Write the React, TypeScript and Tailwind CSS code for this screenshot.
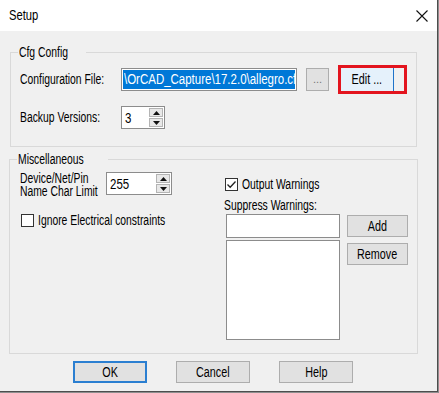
import { type ReactNode } from "react";

const font = {
  fontFamily: '"Liberation Sans", Arial, sans-serif',
};

// the dialog font is narrower than Arial, so squeeze the glyphs horizontally
function T({ children, center, squeeze = "scale-x-[0.74]" }: { children: ReactNode; center?: boolean; squeeze?: string }) {
  return (
    <span className={`inline-block whitespace-nowrap ${squeeze} ${center ? "origin-center" : "origin-left"}`}>
      {children}
    </span>
  );
}

function SpinArrows() {
  return (
    <div className="flex flex-col gap-px">
      <div className="flex h-[9px] w-[14px] items-center justify-center border border-[#b4b4b4] bg-[#e8e8e8]">
        <svg width="7" height="4" viewBox="0 0 7 4">
          <path d="M0 4 L3.5 0 L7 4 Z" fill="#111" />
        </svg>
      </div>
      <div className="flex h-[9px] w-[14px] items-center justify-center border border-[#b4b4b4] bg-[#e8e8e8]">
        <svg width="7" height="4" viewBox="0 0 7 4">
          <path d="M0 0 L3.5 4 L7 0 Z" fill="#111" />
        </svg>
      </div>
    </div>
  );
}

function Spin({ value, width }: { value: string; width: string }) {
  return (
    <div
      className={`flex h-[23px] items-center justify-between border border-[#8c8c8c] bg-white pl-[3px] pr-[1px] ${width}`}
    >
      <span className="text-[14px] leading-none">
        <T squeeze="scale-x-[0.82]">{value}</T>
      </span>
      <SpinArrows />
    </div>
  );
}

function Button({ children, width, primary }: { children: ReactNode; width: string; primary?: boolean }) {
  return (
    <div
      className={`flex h-[22px] items-center justify-center bg-[#e1e1e1] text-[14px] ${width} ${
        primary ? "border-2 border-[#2b7fd1]" : "border border-[#adadad]"
      }`}
    >
      <T center squeeze="scale-x-[0.77]">
        {children}
      </T>
    </div>
  );
}

function Checkbox({ checked }: { checked?: boolean }) {
  return (
    <div className="flex h-[13px] w-[13px] shrink-0 items-center justify-center border border-[#333] bg-white">
      {checked && (
        <svg width="11" height="11" viewBox="0 0 11 11">
          <path d="M1.5 5.5 L4.2 8.3 L9.5 2.5" stroke="#222" strokeWidth="1.3" fill="none" />
        </svg>
      )}
    </div>
  );
}

function Group({ title, children, className }: { title: string; children: ReactNode; className: string }) {
  return (
    <div className={`relative border border-[#d9d9d9] ${className}`}>
      <span className="absolute -top-[8px] left-[7px] w-[68px] text-[14px] leading-[14px]">
        <span className="bg-[#f0f0f0] px-[1px]">
          <T>{title}</T>
        </span>
      </span>
      {children}
    </div>
  );
}

export default function App() {
  return (
    <div className="h-[393px] w-[439px] bg-[#8f8f8f] text-black" style={font}>
      <div className="flex h-[392px] w-[438px] flex-col border-b border-r border-[#4d4d4d] bg-[#f0f0f0]">
        {/* title bar */}
        <div className="flex h-[31px] items-center justify-between bg-white pl-[9px] pr-[9px]">
          <span className="text-[14px]">
            <T squeeze="scale-x-[0.8]">Setup</T>
          </span>
          <svg width="12" height="12" viewBox="0 0 12 12">
            <path d="M0.5 0.5 L11.5 11.5 M11.5 0.5 L0.5 11.5" stroke="#111" strokeWidth="1.1" />
          </svg>
        </div>

        <Group title="Cfg Config" className="ml-[10px] mt-[21px] h-[95px] w-[407px] pl-[9px] pt-[15px]">
          <div className="flex h-[23px] items-center">
            <span className="w-[101px] text-[14px]">
              <T>Configuration File:</T>
            </span>
            <div className="flex h-[23px] w-[176px] items-center overflow-hidden border border-[#8c8c8c] bg-white p-px">
              <div className="flex h-full w-full items-center overflow-hidden bg-[#0078d7] pl-px text-[14px] text-white">
                <T squeeze="scale-x-[0.82]">\OrCAD_Capture\17.2.0\allegro.cfg</T>
              </div>
            </div>
            <div className="ml-[9px] flex h-[23px] w-[23px] items-center justify-center border border-[#adadad] bg-[#e1e1e1] text-[11px] text-[#777]">
              ...
            </div>
            <div className="-my-[3px] ml-[9px] flex h-[29px] w-[69px] border-[3px] border-[#e3141e]">
              <div className="flex h-full w-[53px] items-center justify-center border-r border-[#1f73c9] bg-[#e5f1fb] text-[14px]">
                <T center squeeze="scale-x-[0.77]">
                  Edit ...
                </T>
              </div>
            </div>
          </div>
          <div className="mt-[15px] flex items-center">
            <span className="w-[101px] text-[14px]">
              <T>Backup Versions:</T>
            </span>
            <Spin value="3" width="w-[44px]" />
          </div>
        </Group>

        <Group title="Miscellaneous" className="ml-[9px] mt-[12px] flex h-[195px] w-[409px] pl-[10px] pt-[12px]">
          <div className="w-[204px] shrink-0">
            <div className="flex h-[23px] items-start">
              <div className="flex w-[86px] flex-col text-[14px] leading-[13px]">
                <T>Device/Net/Pin</T>
                <T>Name Char Limit</T>
              </div>
              <Spin value="255" width="w-[66px]" />
            </div>
            <div className="ml-[1px] mt-[19px] flex items-center gap-[4px]">
              <Checkbox />
              <span className="text-[14px] leading-[13px]">
                <T>Ignore Electrical constraints</T>
              </span>
            </div>
          </div>
          <div>
            <div className="ml-[1px] mt-[6px] flex items-center gap-[4px]">
              <Checkbox checked />
              <span className="text-[14px] leading-[13px]">
                <T>Output Warnings</T>
              </span>
            </div>
            <div className="mt-[8px] text-[14px] leading-[13px]">
              <T>Suppress Warnings:</T>
            </div>
            <div className="ml-[2px] mt-[2px] flex">
              <div className="flex flex-col">
                <div className="h-[24px] w-[114px] border border-[#8c8c8c] bg-white" />
                <div className="mt-[2px] h-[100px] w-[114px] border border-[#8c8c8c] bg-white" />
              </div>
              <div className="ml-[7px] flex flex-col">
                <Button width="mt-[1px] w-[61px]">Add</Button>
                <Button width="mt-[6px] w-[61px]">Remove</Button>
              </div>
            </div>
          </div>
        </Group>

        <div className="ml-[73px] mt-[7px] flex gap-[29px]">
          <Button width="h-[21px] w-[74px]" primary>
            OK
          </Button>
          <Button width="h-[21px] w-[74px]">Cancel</Button>
          <Button width="h-[21px] w-[74px]">Help</Button>
        </div>
      </div>
    </div>
  );
}
